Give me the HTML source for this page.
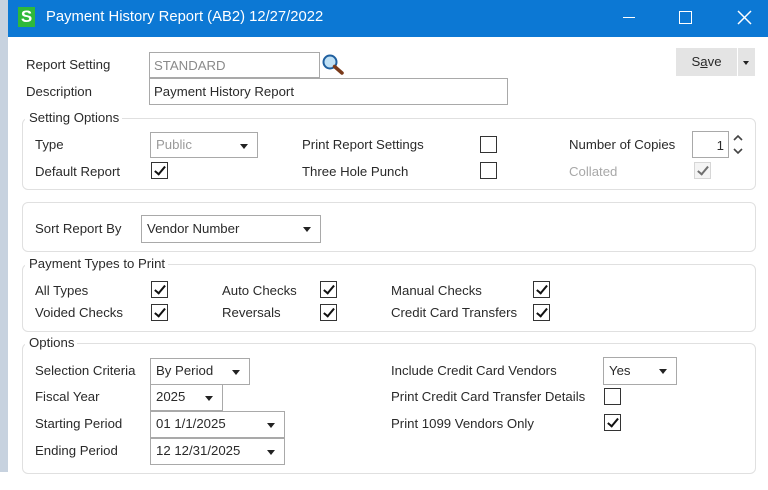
<!DOCTYPE html>
<html><head><style>
*{box-sizing:border-box;margin:0;padding:0}
body{width:768px;height:490px;overflow:hidden;background:#fff;font-family:"Liberation Sans",Arial,sans-serif;font-size:13.2px;color:#2a2a2a;position:relative}
.a{position:absolute;white-space:nowrap}
.lbl{position:absolute;white-space:nowrap;line-height:16px}
.box{position:absolute;border:1px solid #a9a9a9;background:#fff;line-height:1}
.grp{position:absolute;border:1px solid #e0e0e0;border-radius:6px}
.gl{position:absolute;background:#fff;padding:0 3px 0 4px;line-height:14px}
.cb{position:absolute;width:17px;height:17px;border:1.5px solid #333;background:#fff}
.cb.on::after{content:"";position:absolute;left:5px;top:1px;width:4px;height:9px;border:solid #111;border-width:0 2px 2px 0;transform:rotate(40deg)}
.dd{position:absolute;border:1px solid #a9a9a9;background:#fff;padding-left:5px;line-height:24px}
.dd::after{content:"";position:absolute;right:9px;top:11px;border:4.5px solid transparent;border-top:5px solid #222;border-bottom:0}
</style></head><body>
<div class="a" style="left:0;top:0;width:8px;height:472px;background:#c7d2df"></div>
<div class="a" style="left:8px;top:0;width:760px;height:37px;background:#0c78d4"></div>
<div class="a" style="left:18px;top:7px;width:17px;height:20px;background:#2fb93a;color:#fff;font-weight:bold;font-size:17px;text-align:center;line-height:20px">S</div>
<div class="a" style="left:46px;top:9px;color:#fff;font-size:14.8px">Payment History Report (AB2) 12/27/2022</div>
<div class="a" style="left:623px;top:17px;width:12px;height:1px;background:#fff"></div>
<div class="a" style="left:679px;top:11px;width:13px;height:13px;border:1.3px solid #fff"></div>
<svg class="a" style="left:737px;top:10px" width="15" height="15"><path d="M1 1L14 14M14 1L1 14" stroke="#fff" stroke-width="1.5"/></svg>

<div class="lbl" style="left:26px;top:57px">Report Setting</div>
<div class="box" style="left:149px;top:52px;width:171px;height:26px;color:#8a8a8a;padding:6px 4px">STANDARD</div>
<svg class="a" style="left:321px;top:53px" width="24" height="22"><circle cx="9" cy="9" r="6.5" fill="#bfe0f5" stroke="#1f5f9f" stroke-width="2"/><path d="M13.5 13.5L21 20" stroke="#7a3a1a" stroke-width="3.5" stroke-linecap="round"/></svg>
<div class="lbl" style="left:26px;top:84px">Description</div>
<div class="box" style="left:149px;top:78px;width:359px;height:27px;padding:6px 4px">Payment History Report</div>
<div class="a" style="left:676px;top:48px;width:61px;height:28px;background:#e4e4e4;text-align:center;line-height:28px">S<u>a</u>ve</div>
<div class="a" style="left:738px;top:48px;width:17px;height:28px;background:#e4e4e4"></div>
<div class="a" style="left:743px;top:61px;border:3.5px solid transparent;border-top:4px solid #222"></div>

<div class="grp" style="left:22px;top:118px;width:734px;height:72px"></div>
<div class="gl" style="left:25px;top:111px">Setting Options</div>
<div class="lbl" style="left:35px;top:137px">Type</div>
<div class="dd" style="left:150px;top:132px;width:108px;height:26px;color:#9a9a9a">Public</div>
<div class="lbl" style="left:302px;top:137px">Print Report Settings</div>
<div class="cb" style="left:480px;top:136px;border-width:1px"></div>
<div class="lbl" style="left:569px;top:137px">Number of Copies</div>
<div class="box" style="left:692px;top:131px;width:37px;height:27px;text-align:right;padding:7px 4px">1</div>
<svg class="a" style="left:731px;top:133px" width="14" height="24"><path d="M3 7L7 3L11 7M3 16L7 20L11 16" stroke="#444" stroke-width="1.6" fill="none"/></svg>
<div class="lbl" style="left:35px;top:164px">Default Report</div>
<div class="cb on" style="left:151px;top:162px"></div>
<div class="lbl" style="left:302px;top:164px">Three Hole Punch</div>
<div class="cb" style="left:480px;top:162px;border-width:1px"></div>
<div class="lbl" style="left:569px;top:164px;color:#a8a8a8">Collated</div>
<div class="cb on" style="left:694px;top:162px;border:1px solid #bbb;background:#eee;opacity:.6"></div>

<div class="grp" style="left:22px;top:202px;width:734px;height:50px"></div>
<div class="lbl" style="left:35px;top:221px">Sort Report By</div>
<div class="dd" style="left:141px;top:215px;width:180px;height:28px;line-height:26px">Vendor Number</div>

<div class="grp" style="left:22px;top:264px;width:734px;height:68px"></div>
<div class="gl" style="left:25px;top:257px">Payment Types to Print</div>
<div class="lbl" style="left:35px;top:283px">All Types</div>
<div class="cb on" style="left:151px;top:281px"></div>
<div class="lbl" style="left:222px;top:283px">Auto Checks</div>
<div class="cb on" style="left:320px;top:281px"></div>
<div class="lbl" style="left:391px;top:283px">Manual Checks</div>
<div class="cb on" style="left:533px;top:281px"></div>
<div class="lbl" style="left:35px;top:305px">Voided Checks</div>
<div class="cb on" style="left:151px;top:304px"></div>
<div class="lbl" style="left:222px;top:305px">Reversals</div>
<div class="cb on" style="left:320px;top:304px"></div>
<div class="lbl" style="left:391px;top:305px">Credit Card Transfers</div>
<div class="cb on" style="left:533px;top:304px"></div>

<div class="grp" style="left:22px;top:343px;width:734px;height:131px"></div>
<div class="gl" style="left:25px;top:336px">Options</div>
<div class="lbl" style="left:35px;top:363px">Selection Criteria</div>
<div class="dd" style="left:150px;top:358px;width:100px;height:27px">By Period</div>
<div class="lbl" style="left:35px;top:389px">Fiscal Year</div>
<div class="dd" style="left:150px;top:384px;width:73px;height:27px">2025</div>
<div class="lbl" style="left:35px;top:416px">Starting Period</div>
<div class="dd" style="left:150px;top:411px;width:135px;height:27px">01 1/1/2025</div>
<div class="lbl" style="left:35px;top:443px">Ending Period</div>
<div class="dd" style="left:150px;top:438px;width:135px;height:27px">12 12/31/2025</div>
<div class="lbl" style="left:391px;top:363px">Include Credit Card Vendors</div>
<div class="dd" style="left:603px;top:357px;width:74px;height:28px;line-height:26px">Yes</div>
<div class="lbl" style="left:391px;top:389px">Print Credit Card Transfer Details</div>
<div class="cb" style="left:604px;top:388px;border-width:1px"></div>
<div class="lbl" style="left:391px;top:416px">Print 1099 Vendors Only</div>
<div class="cb on" style="left:604px;top:414px"></div>
</body></html>
